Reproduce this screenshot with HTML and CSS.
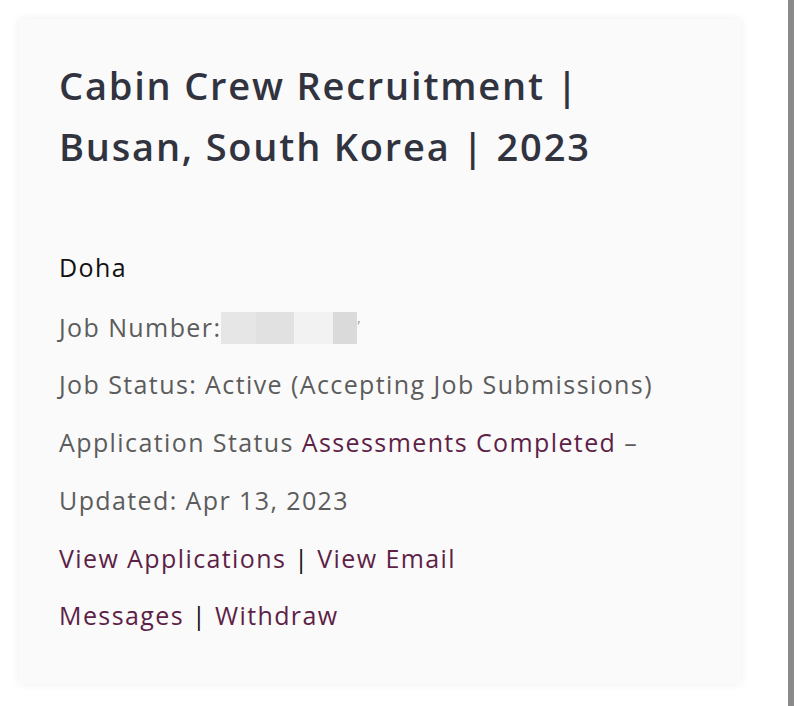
FILE: index.html
```html
<!DOCTYPE html>
<html>
<head>
<meta charset="utf-8">
<link rel="stylesheet" href="styles.css">
</head>
<body>
<div class="page">
  <div class="card">
    <h2 class="title">Cabin Crew Recruitment | Busan, South Korea | 2023</h2>
    <div class="details">
      <p class="city">Doha</p>
      <p class="line">Job Number:<span class="redact"><span class="r1"></span><span class="r2"></span><span class="r3"></span><span class="r4"></span></span><span class="tick">’</span></p>
      <p class="line">Job Status: Active (Accepting Job Submissions)</p>
      <p class="line">Application Status <a class="link" href="#">Assessments Completed</a> – Updated: Apr 13, 2023</p>
      <p class="line links"><a class="link" href="#">View Applications</a> <span class="sep">|</span> <a class="link" href="#">View Email Messages</a> <span class="sep">|</span> <a class="link" href="#">Withdraw</a></p>
    </div>
  </div>
</div>
</body>
</html>
```
FILE: styles.css
```css
html, body {
  margin: 0;
  padding: 0;
  background: #ffffff;
}
body {
  font-family: "Open Sans", "Noto Sans", sans-serif;
}
.page {
  width: 794px;
  height: 706px;
  border-right: 6px solid #8a8a8a;
  box-sizing: border-box;
  padding: 19px 0 0 19px;
}
.card {
  width: 722px;
  height: 665px;
  box-sizing: border-box;
  background: #fafafa;
  box-shadow: 0 0 10px rgba(0, 0, 0, 0.07);
  border-radius: 3px;
  padding: 36px 40px 0 40px;
}
.title {
  margin: 0;
  max-width: 600px;
  font-size: 38px;
  line-height: 61px;
  font-weight: 600;
  letter-spacing: 1.8px;
  color: #31333f;
}
.details {
  margin-top: 62px;
}
.details p {
  margin: 0;
  font-size: 25px;
  letter-spacing: 1.4px;
  line-height: 57.7px;
}
.city {
  color: #111111;
}
.line {
  color: #5c5c5c;
}
.link {
  color: #5e1f47;
  text-decoration: none;
}
.sep {
  color: #111111;
}
.links {
  max-width: 460px;
}
.redact {
  display: inline-flex;
  vertical-align: -7px;
  height: 32px;
}
.redact span {
  display: block;
  height: 32px;
}
.r1 { width: 35px; background: #e6e6e6; }
.r2 { width: 38px; background: #e1e1e1; }
.r3 { width: 39px; background: #f2f2f2; }
.r4 { width: 24px; background: #dadada; }
.tick {
  color: #999;
  font-size: 14px;
  vertical-align: 6px;
}
```
